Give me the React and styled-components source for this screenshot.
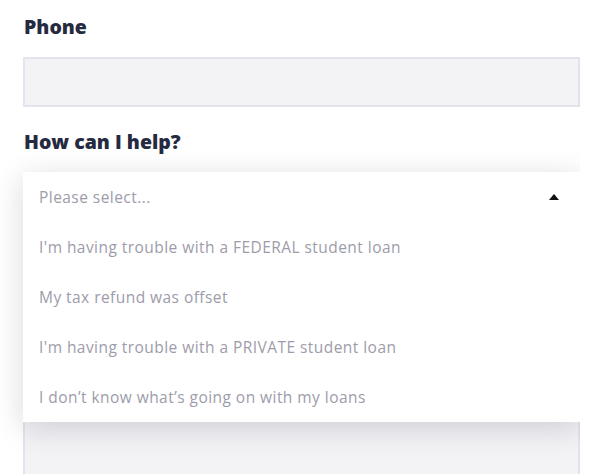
import React from 'react';
import styled, { createGlobalStyle } from 'styled-components';

const GlobalStyle = createGlobalStyle`
  body {
    margin: 0;
    background: #fff;
    font-family: "Open Sans", "Noto Sans", sans-serif;
  }
`;

const Form = styled.div`
  width: 557px;
  padding: 14px 0 0 23px;
  height: 460px;
  overflow: hidden;
`;

const Field = styled.div`
  position: relative;
  margin-bottom: ${(p) => p.gap || 0}px;
`;

const Label = styled.div`
  font-size: 19.5px;
  font-weight: 800;
  color: #262a40;
  line-height: 26px;
  margin-bottom: 17px;
  padding-left: 1px;
`;

const Input = styled.div`
  box-sizing: border-box;
  height: ${(p) => p.h || 50}px;
  background: #f3f3f6;
  border: 2px solid #e4e3ed;
`;

const Select = styled.div`
  position: relative;
  z-index: 2;
  background: #fff;
  box-shadow: 0 6px 28px rgba(20, 20, 40, 0.16);
`;

const Row = styled.div`
  height: 50px;
  display: flex;
  align-items: center;
  justify-content: space-between;
  padding: 0 21px 0 16px;
  font-size: 15.5px;
  letter-spacing: 0.45px;
  color: #9d9caa;
`;

const Caret = styled.span`
  width: 0;
  height: 0;
  border-left: 5px solid transparent;
  border-right: 5px solid transparent;
  border-bottom: 6px solid #111;
`;

const options = [
  "I'm having trouble with a FEDERAL student loan",
  'My tax refund was offset',
  "I'm having trouble with a PRIVATE student loan",
  'I don\u2019t know what\u2019s going on with my loans',
];

export default function App() {
  return (
    <>
      <GlobalStyle />
      <Form>
        <Field gap={22}>
          <Label>Phone</Label>
          <Input />
        </Field>
        <Field>
          <Label>How can I help?</Label>
          <Select>
            <Row>
              Please select...
              <Caret />
            </Row>
            {options.map((o) => (
              <Row key={o}>{o}</Row>
            ))}
          </Select>
          <Input h={120} style={{ marginTop: -30 }} />
        </Field>
      </Form>
    </>
  );
}
